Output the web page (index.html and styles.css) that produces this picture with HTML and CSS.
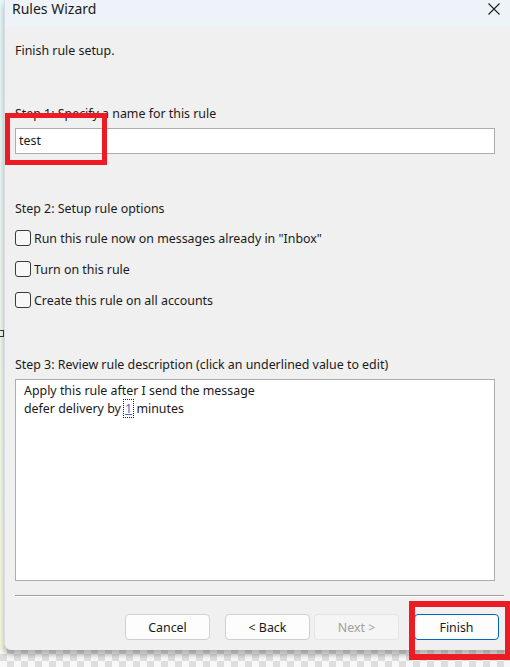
FILE: index.html
```html
<!DOCTYPE html>
<html lang="en">
<head>
    <meta charset="UTF-8">
    <title>Rules Wizard</title>
    <link rel="stylesheet" href="styles.css">
</head>
<body>
    <div class="window">
        <div class="titlebar">
            <span class="title">Rules Wizard</span>
            <svg class="close" width="12" height="12" viewBox="0 0 12 12">
                <path d="M0.5 0.5 L11.5 11.5 M11.5 0.5 L0.5 11.5" stroke="#1c1c1c" stroke-width="1.1" fill="none"/>
            </svg>
        </div>
        <div class="content">
            <div class="intro">Finish rule setup.</div>

            <div class="step step-1">Step 1: Specify a name for this rule</div>
            <div class="name-box">test</div>

            <div class="step step-2">Step 2: Setup rule options</div>
            <div class="options">
                <label class="option"><span class="check"></span>Run this rule now on messages already in "Inbox"</label>
                <label class="option"><span class="check"></span>Turn on this rule</label>
                <label class="option"><span class="check"></span>Create this rule on all accounts</label>
            </div>

            <div class="step step-3">Step 3: Review rule description (click an underlined value to edit)</div>
            <div class="description">
                <div>Apply this rule after I send the message</div>
                <div>defer delivery by <span class="value">1</span> minutes</div>
            </div>
        </div>
        <div class="separator"></div>
        <div class="buttons">
            <button class="btn">Cancel</button>
            <div class="pair">
                <button class="btn">&lt; Back</button>
                <button class="btn disabled">Next &gt;</button>
            </div>
            <button class="btn primary">Finish</button>
        </div>
    </div>

    <span class="stray-mark"></span>
    <div class="mark mark-name"></div>
    <div class="mark mark-finish"></div>
</body>
</html>
```

FILE: styles.css
```css
body {
    margin: 0;
    width: 510px;
    height: 667px;
    overflow: hidden;
    position: relative;
    font-family: "Noto Sans", "Open Sans", sans-serif;
    font-size: 12.4px;
    color: #1a1a1a;
    background:
        linear-gradient(to bottom, #e3f4f6, #eef5ea 60%, #f5f6d8) left top / 4px 650px no-repeat,
        repeating-conic-gradient(#dedede 0 25%, #f8f8f8 0 50%) 0 3px / 14px 14px;
}
.window {
    margin-left: 4px;
    width: 506px;
    height: 650px;
    background-color: #f0f0f0;
    border-left: 1px solid #d8dde3;
    border-bottom-left-radius: 7px;
    box-shadow: 0 5px 5px rgba(0, 0, 0, 0.28);
    box-sizing: border-box;
    display: flex;
    flex-direction: column;
}
.titlebar {
    height: 27px;
    background-color: #eef3f9;
    display: flex;
    align-items: flex-start;
    justify-content: space-between;
    padding: 0 10px 0 7px;
}
.title {
    font-size: 14px;
    line-height: 18px;
}
.close {
    margin-top: 3px;
}
.content {
    padding: 0 15px 0 10px;
    display: flex;
    flex-direction: column;
}
.intro {
    line-height: 16px;
    margin-top: 16px;
}
.step {
    line-height: 16px;
}
.step-1 {
    margin-top: 47px;
}
.name-box {
    margin-top: 6px;
    height: 26px;
    box-sizing: border-box;
    border: 1px solid #adadad;
    background-color: #fff;
    padding: 0 3px;
    line-height: 24px;
}
.step-2 {
    margin-top: 47px;
}
.options {
    display: flex;
    flex-direction: column;
    gap: 15px;
    margin-top: 13px;
}
.option {
    display: flex;
    align-items: center;
    height: 16px;
    gap: 3px;
}
.check {
    width: 14px;
    height: 14px;
    border: 1px solid #3a3a3a;
    border-radius: 3px;
    background-color: #f7f7f7;
}
.step-3 {
    margin-top: 49px;
}
.description {
    margin-top: 6px;
    height: 202px;
    box-sizing: border-box;
    border: 1px solid #adadad;
    background-color: #fff;
    padding: 2px 8px;
    line-height: 18px;
}
.value {
    color: #3a6fc4;
    text-decoration: underline;
    outline: 1px dotted #222;
    padding: 0 1px;
}
.separator {
    margin: 14px 6px 0 10px;
    height: 1px;
    background-color: #a0a0a0;
    border-bottom: 1px solid #fff;
}
.buttons {
    margin-top: 17px;
    padding-right: 11px;
    display: flex;
    justify-content: flex-end;
}
.pair {
    display: flex;
    gap: 4px;
    margin: 0 15px;
}
.btn {
    width: 85px;
    height: 26px;
    font-family: inherit;
    font-size: 12.4px;
    color: #1a1a1a;
    background-color: #fdfdfd;
    border: 1px solid #d0d0d0;
    border-radius: 4px;
}
.btn.disabled {
    color: #a0a0a0;
    background-color: #f5f5f5;
    border-color: #e5e5e5;
}
.btn.primary {
    border-color: #0067c0;
}
.stray-mark {
    position: absolute;
    left: -3px;
    top: 330px;
    width: 5px;
    height: 5px;
    border: 1px solid #333;
}
.mark {
    position: absolute;
    border: 5px solid #ed1c24;
    box-sizing: border-box;
}
.mark-name {
    left: 5px;
    top: 113px;
    width: 102px;
    height: 52px;
}
.mark-finish {
    left: 409px;
    top: 601px;
    width: 102px;
    height: 59px;
    border-width: 6px;
}
```
